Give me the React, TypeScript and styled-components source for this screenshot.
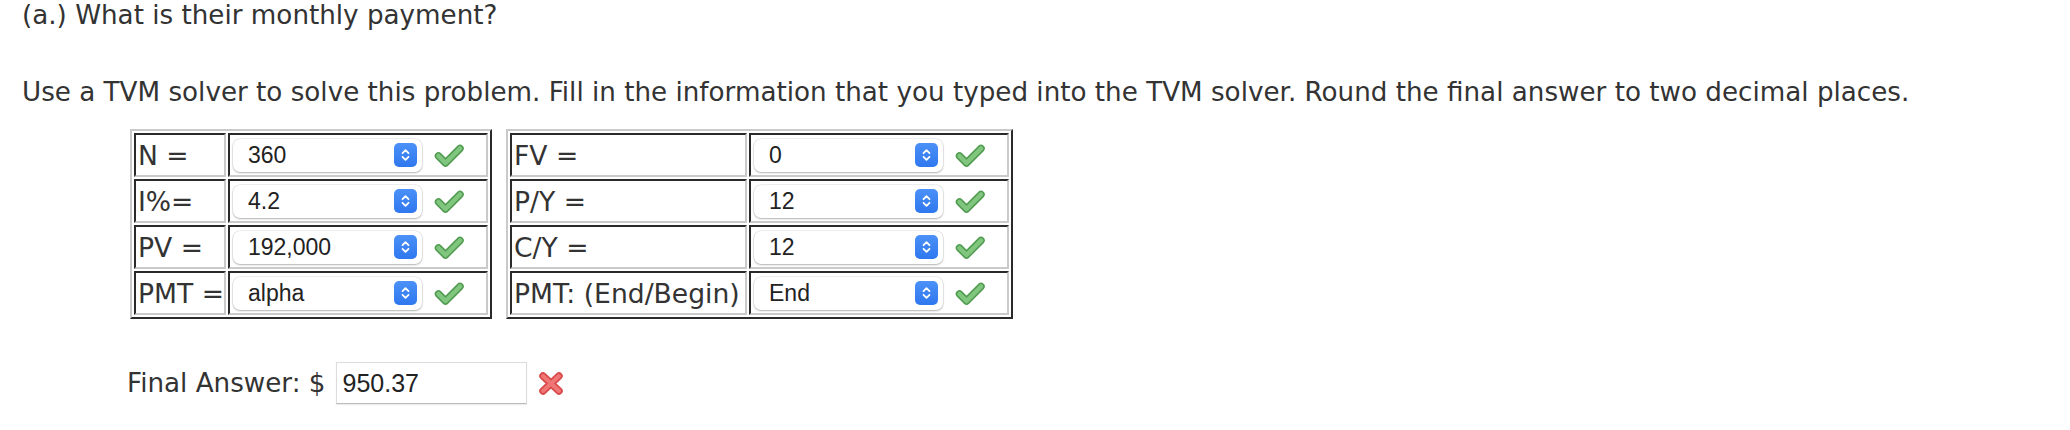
import React from 'react';
import styled, { createGlobalStyle } from 'styled-components';

type Field = { label: string; value: string };

const leftFields: Field[] = [
  { label: 'N =', value: '360' },
  { label: 'I%=', value: '4.2' },
  { label: 'PV =', value: '192,000' },
  { label: 'PMT =', value: 'alpha' },
];

const rightFields: Field[] = [
  { label: 'FV =', value: '0' },
  { label: 'P/Y =', value: '12' },
  { label: 'C/Y =', value: '12' },
  { label: 'PMT: (End/Begin)', value: 'End' },
];

function Stepper() {
  return (
    <svg width="23" height="24" viewBox="0 0 23 24">
      <defs>
        <linearGradient id="stepBlue" x1="0" y1="0" x2="0" y2="1">
          <stop offset="0" stopColor="#4b91f8" />
          <stop offset="1" stopColor="#2f77ef" />
        </linearGradient>
      </defs>
      <rect width="23" height="24" rx="5" fill="url(#stepBlue)" />
      <path d="M8.5 10.2 L11.5 7.2 L14.5 10.2" stroke="#fff" strokeWidth="1.8" fill="none" strokeLinecap="round" strokeLinejoin="round" />
      <path d="M8.5 13.8 L11.5 16.8 L14.5 13.8" stroke="#fff" strokeWidth="1.8" fill="none" strokeLinecap="round" strokeLinejoin="round" />
    </svg>
  );
}

function Check() {
  return (
    <svg width="30" height="25" viewBox="0 0 30 25">
      <path d="M4.5 13 L11.5 20 L26 5.5" stroke="#519c51" strokeWidth="7.5" fill="none" strokeLinecap="round" strokeLinejoin="round" />
      <path d="M4.5 13 L11.5 20 L26 5.5" stroke="#80c67f" strokeWidth="4.5" fill="none" strokeLinecap="round" strokeLinejoin="round" />
    </svg>
  );
}

function Cross() {
  return (
    <svg width="28" height="25" viewBox="0 0 28 25">
      <path d="M6 5 L22 20 M22 5 L6 20" stroke="#d84a4a" strokeWidth="7.5" fill="none" strokeLinecap="round" />
      <path d="M6 5 L22 20 M22 5 L6 20" stroke="#f07676" strokeWidth="4" fill="none" strokeLinecap="round" />
    </svg>
  );
}

function SolverTable({ fields, labelWidth }: { fields: Field[]; labelWidth: number }) {
  return (
    <Solver $labelWidth={labelWidth}>
      {fields.map((f) => (
        <React.Fragment key={f.label}>
          <LabelCell>{f.label}</LabelCell>
          <ValueCell>
            <SelectBox>
              <span>{f.value}</span>
              <Stepper />
            </SelectBox>
            <Mark>
              <Check />
            </Mark>
          </ValueCell>
        </React.Fragment>
      ))}
    </Solver>
  );
}

export default function App() {
  return (
    <>
      <GlobalStyle />
      <Page>
        <Question>(a.) What is their monthly payment?</Question>
        <Instructions>
          Use a TVM solver to solve this problem. Fill in the information that you typed into the TVM solver. Round the final answer to two decimal places.
        </Instructions>
        <Tables>
          <SolverTable fields={leftFields} labelWidth={92} />
          <SolverTable fields={rightFields} labelWidth={237} />
        </Tables>
        <AnswerRow>
          <span>Final Answer: $</span>
          <AnswerInput readOnly value="950.37" />
          <Mark $gap={10}>
            <Cross />
          </Mark>
        </AnswerRow>
      </Page>
    </>
  );
}

const GlobalStyle = createGlobalStyle`
  html, body {
    margin: 0;
    padding: 0;
    background: #fff;
  }
  body {
    font-family: "DejaVu Sans", Verdana, sans-serif;
    color: #333;
  }
`;

const Page = styled.div`
  width: 2070px;
  height: 430px;
  box-sizing: border-box;
  padding-left: 22px;
  font-size: 26.2px;
`;

const Question = styled.p`
  margin: 0;
  line-height: 30px;
`;

const Instructions = styled.p`
  margin: 47px 0 0;
  line-height: 30px;
`;

const Tables = styled.div`
  display: flex;
  gap: 14px;
  margin: 22px 0 0 108px;
`;

const Solver = styled.div<{ $labelWidth: number }>`
  display: grid;
  grid-template-columns: ${(p) => p.$labelWidth}px 260px;
  grid-auto-rows: 44px;
  gap: 2px;
  padding: 2px;
  border: 2px solid;
  border-color: #cacaca #2a2a2a #2a2a2a #cacaca;
`;

const LabelCell = styled.div`
  box-sizing: border-box;
  display: flex;
  align-items: center;
  padding: 0 2px;
  border: 2px solid;
  border-color: #2a2a2a #cacaca #cacaca #2a2a2a;
  white-space: nowrap;
  font-size: 26.6px;
  color: #333;
`;

const ValueCell = styled.div`
  box-sizing: border-box;
  display: flex;
  align-items: center;
  padding-left: 3px;
  border: 2px solid;
  border-color: #2a2a2a #cacaca #cacaca #2a2a2a;
`;

const SelectBox = styled.div`
  box-sizing: border-box;
  width: 189px;
  height: 33px;
  display: flex;
  align-items: center;
  justify-content: space-between;
  padding: 0 5px 0 15px;
  background: #fff;
  border-radius: 7px;
  box-shadow: 0 0 0 0.5px rgba(0, 0, 0, 0.12), 0 1px 2px rgba(0, 0, 0, 0.25);
  font-family: "Liberation Sans", Arial, sans-serif;
  font-size: 23px;
  color: #222;
`;

const Mark = styled.span<{ $gap?: number }>`
  display: flex;
  margin-left: ${(p) => p.$gap ?? 12}px;
`;

const AnswerRow = styled.div`
  display: flex;
  align-items: center;
  margin: 43px 0 0 105px;
  font-size: 26.2px;
  line-height: 30px;
`;

const AnswerInput = styled.input`
  box-sizing: border-box;
  width: 191px;
  height: 42px;
  margin-left: 11px;
  padding: 0 5px;
  border: 1px solid #dcdcdc;
  border-bottom-color: #bdbdbd;
  box-shadow: 0 1px 1px rgba(0, 0, 0, 0.08);
  outline: none;
  font-family: "Liberation Sans", Arial, sans-serif;
  font-size: 25px;
  color: #222;
  background: #fff;
`;
